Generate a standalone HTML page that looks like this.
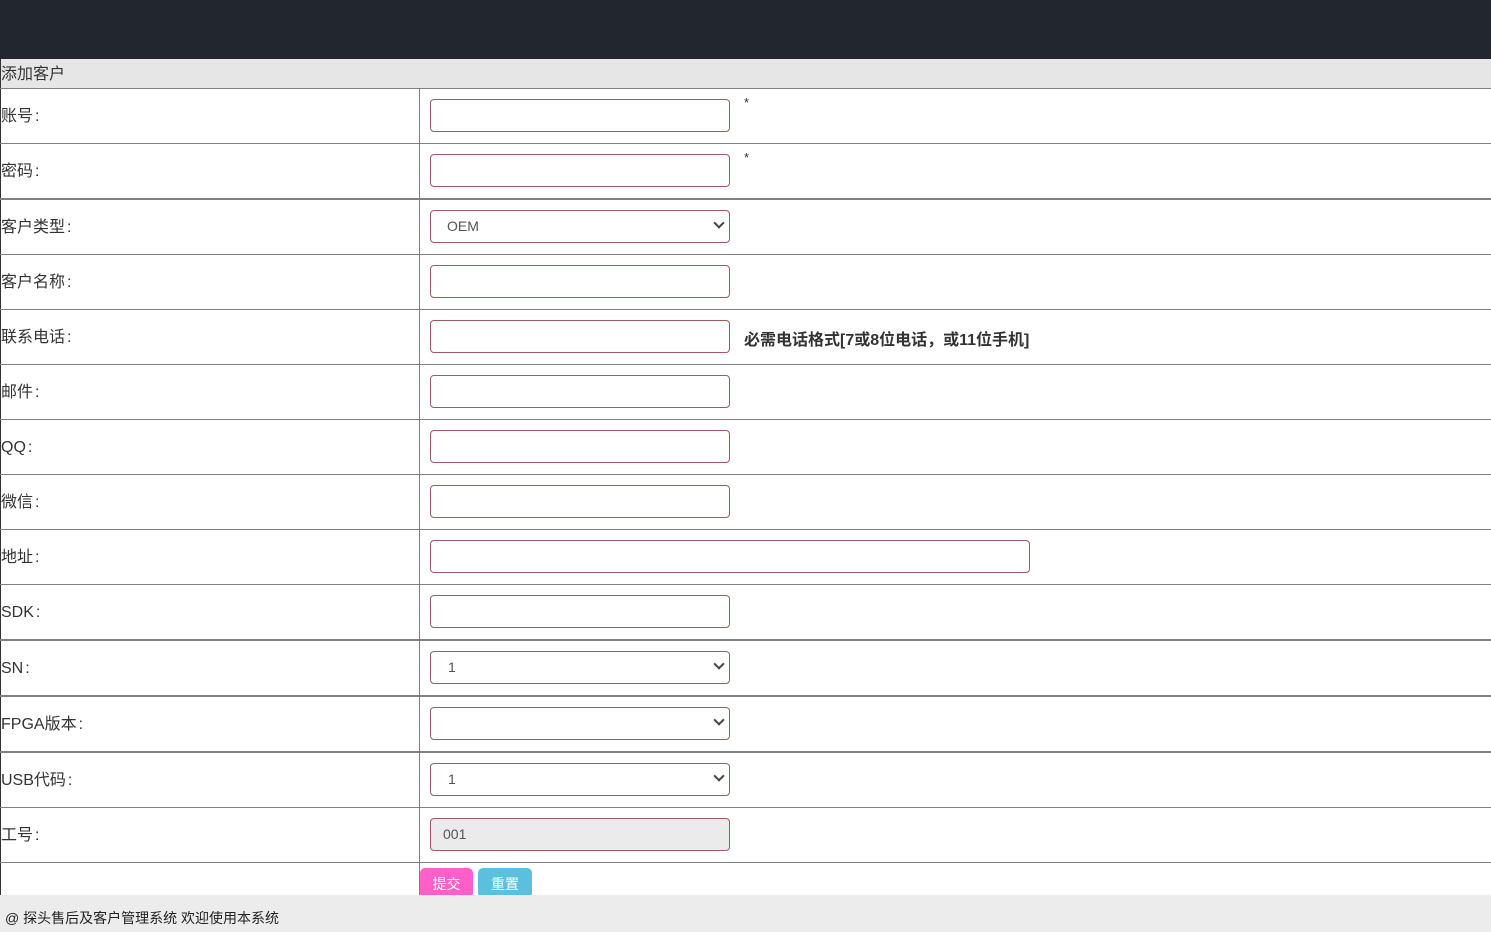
<!DOCTYPE html><html><head><meta charset="utf-8"><style>
body{margin:0;width:1491px;height:932px;overflow:hidden;background:#fff;font-family:"Liberation Sans","Noto Sans CJK SC",sans-serif;position:relative}
.a{position:absolute}
.hl{position:absolute;left:0;width:1491px;background:#808080}
.lb{position:absolute;left:1px;font-size:16px;color:#333;line-height:20px}
.lb i{font-style:normal;margin-left:2px}
.in{position:absolute;left:430px;width:300px;height:33px;border:1px solid #9a5c5c;border-radius:4px;background:#fff;box-sizing:border-box;font-size:14px;color:#555;line-height:31px;padding-left:16px}
.ch{position:absolute;right:6px;top:8px;width:6px;height:6px;border-right:2px solid #444;border-bottom:2px solid #444;transform:rotate(45deg)}
</style></head><body>
<div class="a" style="left:0;top:0;width:1491px;height:59px;background:#22262e"></div>
<div class="a" style="left:0;top:59px;width:1491px;height:29px;background:#e6e6e6"></div>
<div class="lb" style="top:65px">添加客户</div>
<div class="a" style="left:0;top:59px;width:1px;height:836px;background:#333"></div>
<div class="a" style="left:419px;top:88px;width:1px;height:807px;background:#808080"></div>
<div class="hl" style="top:88px;height:1px"></div>
<div class="hl" style="top:143px;height:1px"></div>
<div class="hl" style="top:198px;height:2px"></div>
<div class="hl" style="top:254px;height:1px"></div>
<div class="hl" style="top:309px;height:1px"></div>
<div class="hl" style="top:364px;height:1px"></div>
<div class="hl" style="top:419px;height:1px"></div>
<div class="hl" style="top:474px;height:1px"></div>
<div class="hl" style="top:529px;height:1px"></div>
<div class="hl" style="top:584px;height:1px"></div>
<div class="hl" style="top:639px;height:2px"></div>
<div class="hl" style="top:695px;height:2px"></div>
<div class="hl" style="top:751px;height:2px"></div>
<div class="hl" style="top:807px;height:1px"></div>
<div class="hl" style="top:862px;height:1px"></div>

<div class="lb" style="top:107px">账号<i>:</i></div><div class="in" style="top:99px"></div><div class="a" style="left:744px;top:95px;font-size:13px;color:#333">*</div>
<div class="lb" style="top:162px">密码<i>:</i></div><div class="in" style="top:154px"></div><div class="a" style="left:744px;top:150px;font-size:13px;color:#333">*</div>
<div class="lb" style="top:218px">客户类型<i>:</i></div><div class="in" style="top:210px">OEM<div class="ch"></div></div>
<div class="lb" style="top:273px">客户名称<i>:</i></div><div class="in" style="top:265px"></div>
<div class="lb" style="top:328px">联系电话<i>:</i></div><div class="in" style="top:320px"></div><div class="a" style="left:744px;top:326px;font-size:16px;font-weight:bold;color:#333">必需电话格式[7或8位电话，或11位手机]</div>
<div class="lb" style="top:383px">邮件<i>:</i></div><div class="in" style="top:375px"></div>
<div class="lb" style="top:438px">QQ<i>:</i></div><div class="in" style="top:430px"></div>
<div class="lb" style="top:493px">微信<i>:</i></div><div class="in" style="top:485px"></div>
<div class="lb" style="top:548px">地址<i>:</i></div><div class="in" style="top:540px;width:600px"></div>
<div class="lb" style="top:603px">SDK<i>:</i></div><div class="in" style="top:595px"></div>
<div class="lb" style="top:659px">SN<i>:</i></div><div class="in" style="top:651px;padding-left:17px">1<div class="ch"></div></div>
<div class="lb" style="top:715px">FPGA版本<i>:</i></div><div class="in" style="top:707px"><div class="ch"></div></div>
<div class="lb" style="top:771px">USB代码<i>:</i></div><div class="in" style="top:763px;padding-left:17px">1<div class="ch"></div></div>
<div class="lb" style="top:826px">工号<i>:</i></div><div class="in" style="top:818px;background:#ebebeb;padding-left:12px">001</div>

<div class="a" style="left:420px;top:868px;width:53px;height:30px;background:#ff5fc8;border-radius:5px;color:#fff;font-size:14px;text-align:center;line-height:33px">提交</div>
<div class="a" style="left:478px;top:868px;width:54px;height:30px;background:#5bc0de;border-radius:5px;color:#fff;font-size:14px;text-align:center;line-height:33px">重置</div>
<div class="a" style="left:0;top:895px;width:1491px;height:37px;background:#ececec"></div>
<div class="a" style="left:5px;top:908px;font-size:14px;color:#222">@ 探头售后及客户管理系统 欢迎使用本系统</div>
</body></html>
